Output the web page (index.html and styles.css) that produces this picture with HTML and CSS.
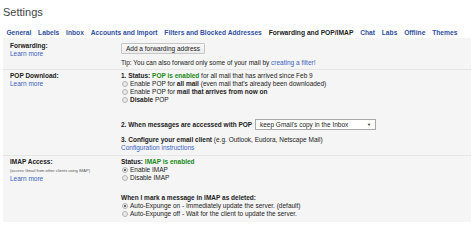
FILE: index.html
```html
<!DOCTYPE html><html><head><meta charset="utf-8">
<title>Settings</title>
<link rel="stylesheet" href="styles.css">
</head><body>

<div class="title">Settings</div>

<div class="tabs">
<a class="tab">General</a>
<a class="tab">Labels</a>
<a class="tab">Inbox</a>
<a class="tab">Accounts and Import</a>
<a class="tab">Filters and Blocked Addresses</a>
<span class="tab active">Forwarding and POP/IMAP</span>
<a class="tab">Chat</a>
<a class="tab">Labs</a>
<a class="tab">Offline</a>
<a class="tab">Themes</a>
</div>

<div class="panel">

<div class="row r1">
<div class="lab"><b>Forwarding:</b><br><a>Learn more</a></div>
<div class="val">
<span class="btn">Add a forwarding address</span>
<div class="tip">Tip: You can also forward only some of your mail by <a>creating a filter!</a></div>
</div>
</div>

<div class="row r2">
<div class="lab"><b>POP Download:</b><br><a>Learn more</a></div>
<div class="val">
<div><b>1. Status: <span class="ok">POP is enabled</span></b> for all mail that has arrived since Feb 9</div>
<div><i class="radio"></i>Enable POP for <b>all mail</b> (even mail that's already been downloaded)</div>
<div><i class="radio"></i>Enable POP for <b>mail that arrives from now on</b></div>
<div><i class="radio"></i><b>Disable</b> POP</div>
<div class="step2"><b>2. When messages are accessed with POP</b> <span class="sel">keep Gmail's copy in the Inbox<i>&#9660;</i></span></div>
<div class="step3"><b>3. Configure your email client</b> (e.g. Outlook, Eudora, Netscape Mail)</div>
<div><a>Configuration instructions</a></div>
</div>
</div>

<div class="row r3">
<div class="lab"><b>IMAP Access:</b><br><span class="small">(access Gmail from other clients using IMAP)</span><br><a>Learn more</a></div>
<div class="val">
<div><b>Status: <span class="ok">IMAP is enabled</span></b></div>
<div><i class="radio on"></i>Enable IMAP</div>
<div><i class="radio"></i>Disable IMAP</div>
<div class="del"><b>When I mark a message in IMAP as deleted:</b></div>
<div><i class="radio on"></i>Auto-Expunge on - Immediately update the server. (default)</div>
<div><i class="radio"></i>Auto-Expunge off - Wait for the client to update the server.</div>
</div>
</div>

</div>
</body></html>
```

FILE: styles.css
```css
body {
	margin: 0;
	font-family: "Liberation Sans", Arial, sans-serif;
	font-size: 6.5px;
	line-height: 8px;
	color: #222;
	background: #fff;
}
a {
	color: #3a63c0;
}
.title {
	padding: 5px 0 0 3px;
	height: 19px;
	font-size: 11px;
	line-height: 14px;
	color: #444;
}
.tabs {
	display: flex;
	padding: 4px 0 0 3px;
	height: 10px;
	line-height: 10px;
	font-weight: bold;
	font-size: 6.7px;
}
.tab {
	padding: 0 3.4px;
	color: #2f4f9e;
}
.tab.active {
	color: #222;
}
.panel {
	margin: 0 3px 0 3px;
	background: #f5f5f5;
	height: 184px;
}
.row {
	display: flex;
	border-bottom: 1px solid #e6e6e6;
}
.lab {
	width: 111px;
	padding-left: 7px;
	flex: none;
}
.val {
	flex: 1;
}
.r1 {
	padding: 4px 0 2px;
}
.r1 .val {
	padding-top: 1px;
}
.btn {
	display: inline-block;
	height: 9px;
	line-height: 9px;
	padding: 0 4px;
	border: 1px solid #c6c6c6;
	border-radius: 1px;
	background: linear-gradient(#f8f8f8, #ececec);
	color: #222;
}
.tip {
	margin-top: 5px;
}
.r2 {
	padding: 2px 0 3px;
}
.ok {
	color: #1a8a1a;
}
.radio {
	display: inline-block;
	width: 4px;
	height: 4px;
	margin: 0 2px 0 1px;
	border: 0.7px solid #b5b5b5;
	border-radius: 50%;
	background: #e9e9e9;
	vertical-align: -0.5px;
	box-sizing: content-box;
	position: relative;
}
.radio.on::after {
	content: "";
	position: absolute;
	left: 1px;
	top: 1px;
	width: 2px;
	height: 2px;
	border-radius: 50%;
	background: #444;
}
.step2 {
	margin-top: 15px;
	height: 11px;
	line-height: 11px;
}
.sel {
	display: inline-block;
	width: 115px;
	height: 9px;
	line-height: 9px;
	padding-left: 4px;
	border: 1px solid #a9a9a9;
	background: #fff;
	vertical-align: top;
	position: relative;
	margin-left: 1px;
}
.sel i {
	position: absolute;
	right: 4px;
	top: 0;
	font-style: normal;
	font-size: 4px;
}
.step3 {
	margin-top: 6px;
}
.r3 {
	padding: 2px 0 4px;
	border-bottom: none;
}
.small {
	font-size: 4px;
	color: #555;
}
.del {
	margin-top: 12px;
}
```
